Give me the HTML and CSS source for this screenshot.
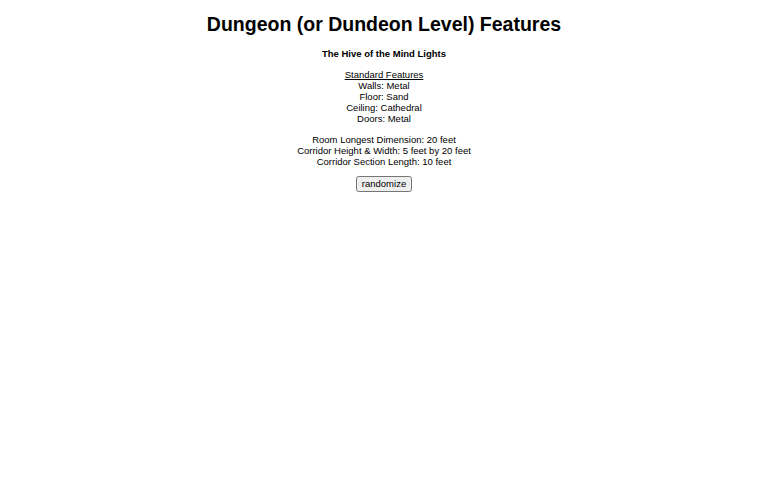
FILE: index.html
```html
<!DOCTYPE html>
<html lang="en">
<head>
<meta charset="UTF-8">
<title>Dungeon Features</title>
<link rel="stylesheet" href="styles.css">
</head>
<body>
<h1>Dungeon (or Dundeon Level) Features</h1>
<div class="features">
    <h2>The Hive of the Mind Lights</h2>
    <p>
        <u>Standard Features</u><br>
        Walls: Metal<br>
        Floor: Sand<br>
        Ceiling: Cathedral<br>
        Doors: Metal
    </p>
    <p class="sizes">
        Room Longest Dimension: 20 feet<br>
        Corridor Height &amp; Width: 5 feet by 20 feet<br>
        Corridor Section Length: 10 feet
    </p>
    <button type="button">randomize</button>
</div>
</body>
</html>
```

FILE: styles.css
```css
body {
    margin: 8px;
    font-family: "Liberation Sans", Arial, sans-serif;
    text-align: center;
    color: #000;
}

h1 {
    font-size: 19.5px;
    line-height: 22px;
    margin: 5px 0 13px;
}

.features {
    font-size: 9.5px;
    line-height: 11px;
}

.features h2 {
    font-size: 9.5px;
    margin: 0 0 10px;
}

.features p {
    margin: 0 0 10px;
}

.features p.sizes {
    margin-bottom: 9px;
}

.features button {
    font-family: "Liberation Sans", Arial, sans-serif;
    font-size: 9.5px;
    line-height: 12px;
    padding: 0 4px;
    margin: 0;
}
```
